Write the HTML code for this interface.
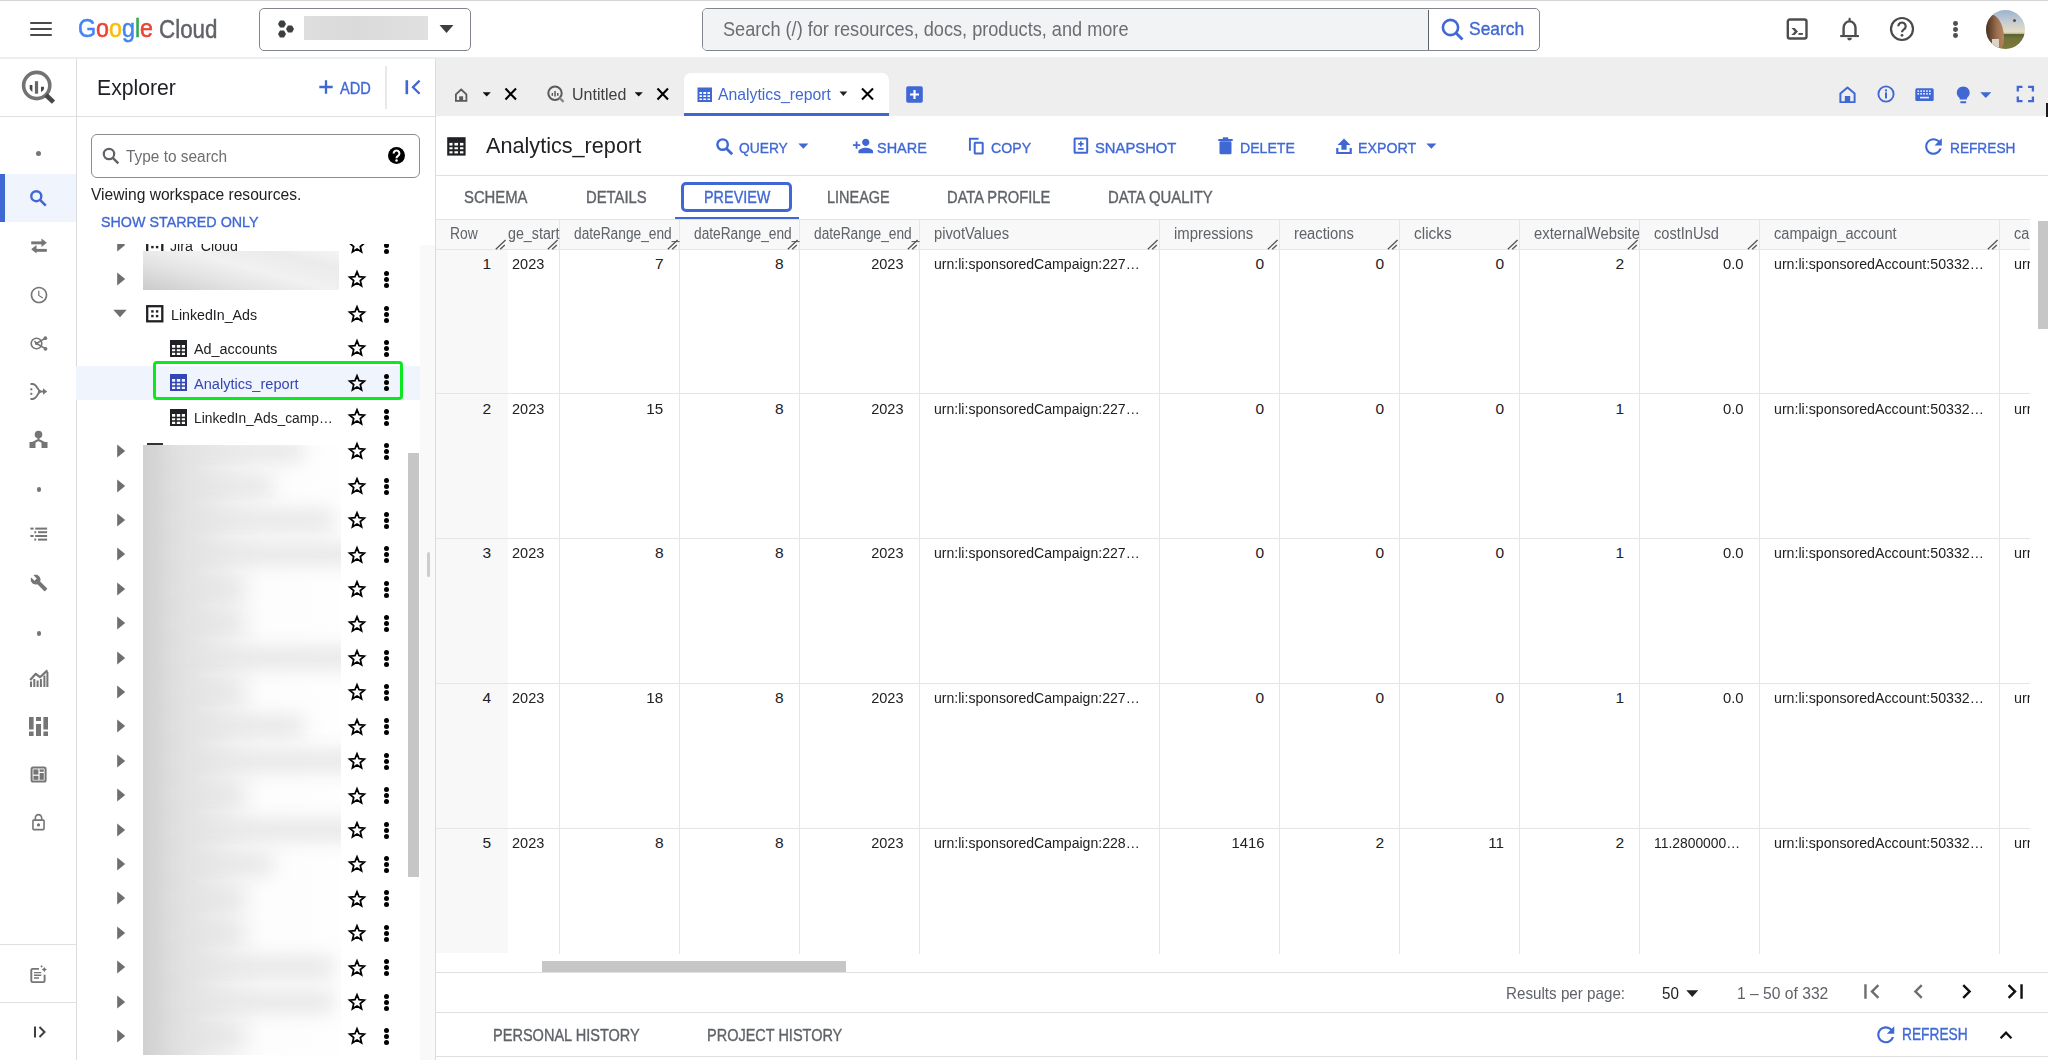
<!DOCTYPE html>
<html><head><meta charset="utf-8"><style>
html,body{margin:0;padding:0;width:2048px;height:1060px;overflow:hidden;background:#fff;}
body{position:relative;font-family:"Liberation Sans",sans-serif;}
.t{position:absolute;white-space:nowrap;line-height:1;font-family:"Liberation Sans",sans-serif;}
.r{position:absolute;display:block;}
</style></head><body>
<div class="r" style="left:0px;top:0px;width:2048px;height:1px;background:#d4d4d4"></div>
<div class="r" style="left:0px;top:57px;width:2048px;height:2px;background:#eceef0"></div>
<div class="r" style="left:30px;top:21.6px;width:21.6px;height:2.2px;background:#4a4a4a;border-radius:1px"></div>
<div class="r" style="left:30px;top:27.7px;width:21.6px;height:2.2px;background:#4a4a4a;border-radius:1px"></div>
<div class="r" style="left:30px;top:33.8px;width:21.6px;height:2.2px;background:#4a4a4a;border-radius:1px"></div>
<div class="t" style="left:78.00px;top:16.41px;font-size:25.5px;-webkit-text-stroke:0.55px currentColor;transform:scaleX(0.9124);transform-origin:0 0"><span style="color:#4285f4">G</span><span style="color:#ea4335">o</span><span style="color:#fbbc05">o</span><span style="color:#4285f4">g</span><span style="color:#34a853">l</span><span style="color:#ea4335">e</span></div>
<div class="t" style="top:16.91px;font-size:25.50px;color:#5f6368;transform:scaleX(0.8784);transform-origin:0 0;left:158.90px;-webkit-text-stroke:0.45px currentColor;">Cloud</div>
<div class="r" style="left:259px;top:8px;width:212px;height:43px;box-sizing:border-box;border:1px solid #80868b;border-radius:5px;background:#fff"></div>
<svg class="r" style="left:275px;top:19px;" width="20" height="20" viewBox="0 0 20 20"><polygon fill="#3c4043" points="5,1.5 9,1.5 11,5 9,8.5 5,8.5 3,5"/><polygon fill="#3c4043" points="13,6.5 17,6.5 19,10 17,13.5 13,13.5 11,10"/><polygon fill="#3c4043" points="5,11.5 9,11.5 11,15 9,18.5 5,18.5 3,15"/></svg>
<div class="r" style="left:304px;top:16px;width:124px;height:24px;background:linear-gradient(90deg,#dedede,#dadada 40%,#e0e0e0);filter:blur(0.6px)"></div>
<svg class="r" style="left:439px;top:24px;" width="16" height="10" viewBox="0 0 16 10"><polygon fill="#3c4043" points="0.5,1 14.5,1 7.5,9"/></svg>
<div class="r" style="left:702px;top:8px;width:838px;height:43px;box-sizing:border-box;border:1px solid #80868b;border-radius:5px;background:#fff;overflow:hidden"></div>
<div class="r" style="left:703px;top:9px;width:725.5px;height:41px;background:#f1f3f4;border-radius:4px 0 0 4px"></div>
<div class="r" style="left:1428px;top:9.5px;width:1px;height:40px;background:#5f6368"></div>
<div class="t" style="top:19.76px;font-size:19.30px;color:#6a6e73;transform:scaleX(0.9413);transform-origin:0 0;left:722.50px;">Search (/) for resources, docs, products, and more</div>
<svg class="r" style="left:1440px;top:17px;" width="26" height="26" viewBox="0 0 26 26"><circle cx="10.5" cy="10.5" r="7.6" fill="none" stroke="#4068d4" stroke-width="2.6"/><line x1="16" y1="16" x2="22.5" y2="22.5" stroke="#4068d4" stroke-width="2.8"/></svg>
<div class="t" style="top:19.62px;font-size:18.40px;color:#4068d4;-webkit-text-stroke:0.35px currentColor;transform:scaleX(0.9485);transform-origin:0 0;left:1469.30px;">Search</div>
<svg class="r" style="left:1785px;top:17px;" width="24" height="24" viewBox="0 0 24 24"><rect x="2.8" y="2.5" width="18.7" height="19" rx="2" fill="none" stroke="#4d4d4d" stroke-width="2.4"/><polygon points="6.4,11 9.6,11 13,14.5 9.6,18 6.4,18 9.8,14.5" fill="#4d4d4d"/><rect x="13.5" y="16" width="4.3" height="1.9" fill="#4d4d4d"/></svg>
<svg class="r" style="left:1838px;top:16px;" width="24" height="26" viewBox="0 0 24 26"><path d="M5.6 19.5 V11.8 A5.95 6.4 0 0 1 17.5 11.8 V19.5" fill="none" stroke="#4d4d4d" stroke-width="2.4"/><rect x="10.5" y="1.7" width="2.2" height="4" rx="1" fill="#4d4d4d"/><rect x="2.2" y="19" width="18.7" height="2.1" fill="#4d4d4d"/><path d="M9.3 21.8 H13.9 A2.3 2.6 0 0 1 9.3 21.8z" fill="#4d4d4d"/></svg>
<svg class="r" style="left:1889px;top:16px;" width="26" height="26" viewBox="0 0 26 26"><circle cx="13" cy="13" r="11" fill="none" stroke="#4a4a4a" stroke-width="2.2"/><path d="M9.3 10.2 a3.7 3.7 0 1 1 5.6 3.2 c-1.3 0.8-1.9 1.4-1.9 2.8" fill="none" stroke="#4a4a4a" stroke-width="2.2"/><circle cx="13" cy="19.3" r="1.4" fill="#4a4a4a"/></svg>
<div class="r" style="left:1953.2px;top:20.9px;width:4.8px;height:4.8px;border-radius:50%;background:#505050"></div>
<div class="r" style="left:1953.2px;top:27.0px;width:4.8px;height:4.8px;border-radius:50%;background:#505050"></div>
<div class="r" style="left:1953.2px;top:33.2px;width:4.8px;height:4.8px;border-radius:50%;background:#505050"></div>
<div class="r" style="left:1986px;top:10px;width:39px;height:39px;border-radius:50%;overflow:hidden;background:linear-gradient(180deg,#9db3cc 0%,#c3ccd3 30%,#e6dcc3 56%,#cfc29a 60%,#55603a 63%,#727238 72%,#7d7a3c 100%)"><div style="position:absolute;left:-6px;top:4px;width:24px;height:40px;border-radius:0 60% 40% 0;background:linear-gradient(90deg,#2a1d16 0%,#5a3c2a 35%,#9a6e4e 70%,#b8875f 100%)"></div><div style="position:absolute;left:6px;top:29px;width:7px;height:12px;background:#dcd4c6"></div><div style="position:absolute;left:27px;top:9px;width:3px;height:3px;border-radius:50%;background:#6b4a2a"></div></div>
<div class="r" style="left:76px;top:59px;width:1px;height:1001px;background:#dadce0"></div>
<div class="r" style="left:0px;top:116px;width:76px;height:1px;background:#e0e0e0"></div>
<svg class="r" style="left:20px;top:69px;" width="38" height="38" viewBox="0 0 38 38"><circle cx="16.7" cy="16.5" r="13.1" fill="none" stroke="#737373" stroke-width="3.6"/><line x1="26" y1="26" x2="33.5" y2="33.2" stroke="#474747" stroke-width="4.6"/><path d="M9.7 16.1 H12.4 V22.9 Q10.6 21.5 9.7 19.8z" fill="#474747"/><rect x="14.9" y="12.2" width="3.2" height="12.5" fill="#666"/><path d="M21 17.7 H24 V20 Q23.2 22 21 22.9z" fill="#474747"/></svg>
<div class="r" style="left:36px;top:150.7px;width:5px;height:5px;border-radius:50%;background:#757575"></div>
<div class="r" style="left:0px;top:174px;width:76px;height:48px;background:#eff4fd"></div>
<div class="r" style="left:0px;top:174px;width:5px;height:48px;background:#4068d4"></div>
<svg class="r" style="left:28px;top:188px;" width="20" height="20" viewBox="0 0 20 20"><circle cx="8.3" cy="8.2" r="5" fill="none" stroke="#4068d4" stroke-width="2.4"/><line x1="11.8" y1="11.7" x2="17.8" y2="17.7" stroke="#4068d4" stroke-width="2.6"/></svg>
<svg class="r" style="left:30px;top:238px;" width="18" height="18" viewBox="0 0 18 18"><rect x="1.2" y="3.4" width="11" height="2.9" fill="#757575"/><polygon points="11.5,0.6 16.8,4.85 11.5,9.1" fill="#757575"/><rect x="5.8" y="10.9" width="11" height="2.9" fill="#757575"/><polygon points="6.5,7.1 1.2,11.35 6.5,15.6" fill="#757575"/></svg>
<svg class="r" style="left:28.5px;top:285px;" width="20" height="20" viewBox="0 0 24 24"><path fill="#757575" d="M11.99 2C6.47 2 2 6.48 2 12s4.47 10 9.99 10C17.52 22 22 17.52 22 12S17.52 2 11.99 2zM12 20c-4.42 0-8-3.58-8-8s3.58-8 8-8 8 3.58 8 8-3.58 8-8 8zm.5-13H11v6l5.25 3.15.75-1.23-4.5-2.67z"/></svg>
<svg class="r" style="left:29px;top:334px;" width="19" height="19" viewBox="0 0 19 19"><circle cx="7.5" cy="9.5" r="5.3" fill="none" stroke="#757575" stroke-width="1.6"/><circle cx="7.5" cy="9.5" r="1.5" fill="#757575"/><path d="M5.5 7 L7.5 9.5 L16.5 4.2 M7.5 9.5 L16.8 14.8" stroke="#757575" stroke-width="1.5" fill="none"/><circle cx="16.3" cy="4.2" r="1.9" fill="#757575"/><circle cx="16.5" cy="14.8" r="1.9" fill="#757575"/></svg>
<svg class="r" style="left:29px;top:382px;" width="19" height="19" viewBox="0 0 19 19"><path d="M1.5 2 H3.5 C8.5 2 8.5 9.5 12 9.5 C8.5 9.5 8.5 17 3.5 17 H1.5" fill="none" stroke="#757575" stroke-width="1.8"/><path d="M9 9.5 H14.5" stroke="#757575" stroke-width="1.9"/><polygon points="14,6.3 18.2,9.5 14,12.7" fill="#757575"/><rect x="1.3" y="6.3" width="2" height="2" fill="#757575"/><rect x="1.3" y="10.8" width="2" height="2" fill="#757575"/></svg>
<svg class="r" style="left:29px;top:430px;" width="19" height="19" viewBox="0 0 19 19"><circle cx="9.5" cy="4.5" r="3.8" fill="#757575"/><rect x="0.5" y="12" width="6" height="6" fill="#757575"/><rect x="12.5" y="12" width="6" height="6" fill="#757575"/><path d="M9.5 7 V10 L3.5 13 M9.5 10 L15.5 13" stroke="#757575" stroke-width="2" fill="none"/></svg>
<div class="r" style="left:36.5px;top:487px;width:4.5px;height:4.5px;border-radius:50%;background:#757575"></div>
<svg class="r" style="left:29px;top:526px;" width="20" height="16" viewBox="0 0 20 16"><rect x="1.4" y="1.6" width="3.2" height="2" fill="#757575"/><rect x="6.2" y="1.6" width="11.9" height="2" fill="#757575"/><rect x="5.3" y="5.2" width="1.9" height="2" fill="#757575"/><rect x="9" y="5.2" width="9.1" height="2" fill="#757575"/><rect x="1.4" y="9" width="3.2" height="2" fill="#757575"/><rect x="6.2" y="9" width="11.9" height="2" fill="#757575"/><rect x="5.3" y="12.6" width="1.9" height="2" fill="#757575"/><rect x="9" y="12.6" width="9.1" height="2" fill="#757575"/></svg>
<svg class="r" style="left:30px;top:574px;" width="18" height="18" viewBox="0 0 24 24"><path fill="#757575" d="M22.7 19l-9.1-9.1c.9-2.3.4-5-1.5-6.9-2-2-5-2.4-7.4-1.3L9 6 6 9 1.6 4.7C.4 7.1.9 10.1 2.9 12.1c1.9 1.9 4.6 2.4 6.9 1.5l9.1 9.1c.4.4 1 .4 1.4 0l2.3-2.3c.5-.4.5-1.1.1-1.4z"/></svg>
<div class="r" style="left:36.5px;top:631px;width:4.5px;height:4.5px;border-radius:50%;background:#757575"></div>
<svg class="r" style="left:29px;top:669px;" width="20" height="20" viewBox="0 0 20 20"><path d="M2 18 V12.5 M5.3 18 V10 M8.6 18 V11.5 M11.9 18 V10 M15.4 18 V6.5 M18.4 18 V3" stroke="#757575" stroke-width="2"/><path d="M1.2 11 L6.8 4.8 L11 8.2 L18.4 1.4" stroke="#757575" stroke-width="2.2" fill="none" stroke-linejoin="round"/></svg>
<svg class="r" style="left:28px;top:716px;" width="21" height="21" viewBox="0 0 21 21"><rect x="1" y="1" width="4.6" height="12.5" fill="#757575"/><rect x="1" y="15.5" width="4.6" height="4.5" fill="#757575"/><rect x="8" y="1" width="5" height="4" fill="#757575"/><rect x="8" y="8" width="5" height="12" fill="#757575"/><rect x="15.4" y="1" width="4.6" height="12.5" fill="#757575"/><rect x="15.4" y="15.5" width="4.6" height="4.5" fill="#757575"/></svg>
<svg class="r" style="left:29px;top:765px;" width="19" height="19" viewBox="0 0 19 19"><rect x="2.6" y="2.6" width="14" height="14" rx="1.6" fill="none" stroke="#757575" stroke-width="2"/><rect x="4.4" y="4.4" width="5" height="5.2" fill="#757575"/><rect x="4.4" y="10.8" width="5" height="4" fill="#757575"/><rect x="10.6" y="4.4" width="4.2" height="2.4" fill="#757575"/><rect x="10.6" y="8" width="4.2" height="6.8" fill="#757575"/></svg>
<svg class="r" style="left:29px;top:813px;" width="19" height="19" viewBox="0 0 24 24"><path fill="#757575" d="M18 8h-1V6c0-2.76-2.24-5-5-5S7 3.24 7 6v2H6c-1.1 0-2 .9-2 2v10c0 1.1.9 2 2 2h12c1.1 0 2-.9 2-2V10c0-1.1-.9-2-2-2zM9 6c0-1.66 1.34-3 3-3s3 1.34 3 3v2H9V6zm9 14H6V10h12v10zm-6-3c1.1 0 2-.9 2-2s-.9-2-2-2-2 .9-2 2 .9 2 2 2z"/></svg>
<div class="r" style="left:0px;top:944px;width:76px;height:1px;background:#e0e0e0"></div>
<svg class="r" style="left:29px;top:965px;" width="19" height="19" viewBox="0 0 19 19"><path d="M10 3.9 H3.6 a1.3 1.3 0 0 0 -1.3 1.3 V15.8 a1.3 1.3 0 0 0 1.3 1.3 H14.3 a1.3 1.3 0 0 0 1.3 -1.3 V9.8" fill="none" stroke="#757575" stroke-width="1.9"/><path d="M5 7.6 H12.3 M5 10.3 H12.3 M5 13 H10" stroke="#757575" stroke-width="1.4"/><path d="M15.3 1.9999999999999996 Q15.950000000000001 3.9499999999999997 17.900000000000002 4.6 Q15.950000000000001 5.25 15.3 7.199999999999999 Q14.65 5.25 12.700000000000001 4.6 Q14.65 3.9499999999999997 15.3 1.9999999999999996z" fill="#757575"/><path d="M12.6 0.09999999999999987 Q12.924999999999999 1.075 13.9 1.4 Q12.924999999999999 1.7249999999999999 12.6 2.7 Q12.275 1.7249999999999999 11.299999999999999 1.4 Q12.275 1.075 12.6 0.09999999999999987z" fill="#757575"/></svg>
<div class="r" style="left:0px;top:1002px;width:76px;height:1px;background:#e0e0e0"></div>
<svg class="r" style="left:32px;top:1024px;" width="16" height="16" viewBox="0 0 16 16"><rect x="2" y="2.5" width="2" height="11" fill="#3c4043"/><path d="M7.5 3 L12.5 8 L7.5 13" fill="none" stroke="#3c4043" stroke-width="2"/></svg>
<div class="r" style="left:76px;top:116px;width:359px;height:1px;background:#e0e0e0"></div>
<div class="t" style="top:76.75px;font-size:22.50px;color:#202124;transform:scaleX(0.9415);transform-origin:0 0;left:96.50px;">Explorer</div>
<svg class="r" style="left:317px;top:78px;" width="18" height="18" viewBox="0 0 18 18"><path d="M9 2.3 V15.7 M2.3 9 H15.7" stroke="#4068d4" stroke-width="2.3"/></svg>
<div class="t" style="top:79.59px;font-size:16.20px;color:#4068d4;-webkit-text-stroke:0.35px currentColor;transform:scaleX(0.9035);transform-origin:0 0;left:340.40px;">ADD</div>
<div class="r" style="left:385px;top:66px;width:1.5px;height:42.5px;background:#e8e8e8"></div>
<svg class="r" style="left:403px;top:78px;" width="20" height="18" viewBox="0 0 20 18"><rect x="2.5" y="2.2" width="2.6" height="14" fill="#4068d4"/><path d="M16.6 2.6 L10 9.2 L16.6 15.8" fill="none" stroke="#4068d4" stroke-width="2.3"/></svg>
<div class="r" style="left:91px;top:134px;width:329px;height:43.5px;box-sizing:border-box;border:1px solid #8a8d91;border-radius:6px;background:#fff"></div>
<svg class="r" style="left:102px;top:147px;" width="18" height="18" viewBox="0 0 18 18"><circle cx="7" cy="7" r="5.2" fill="none" stroke="#5f6368" stroke-width="2.2"/><line x1="10.8" y1="10.8" x2="16.3" y2="16.3" stroke="#5f6368" stroke-width="2.4"/></svg>
<div class="t" style="top:147.86px;font-size:17.30px;color:#6b6e72;transform:scaleX(0.8916);transform-origin:0 0;left:126.30px;">Type to search</div>
<svg class="r" style="left:387px;top:146px;" width="19" height="19" viewBox="0 0 19 19"><circle cx="9.5" cy="9.5" r="8.5" fill="#000"/><path d="M6.6 7.4 a2.9 2.9 0 1 1 4.4 2.5 c-1 0.6-1.5 1.1-1.5 2.3" fill="none" stroke="#fff" stroke-width="2.1"/><circle cx="9.5" cy="14.6" r="1.25" fill="#fff"/></svg>
<div class="t" style="top:186.96px;font-size:16.00px;color:#202124;transform:scaleX(0.9745);transform-origin:0 0;left:91.30px;">Viewing workspace resources.</div>
<div class="t" style="top:213.68px;font-size:15.50px;color:#4068d4;-webkit-text-stroke:0.35px currentColor;transform:scaleX(0.9221);transform-origin:0 0;left:100.90px;">SHOW STARRED ONLY</div>
<div class="r" style="left:76px;top:244px;width:344px;height:816px;overflow:hidden">
<svg class="r" style="left:41px;top:-6.309999999999974px;" width="9" height="14" viewBox="0 0 9 14"><polygon points="0.2,0.5 8.2,7 0.2,13.5" fill="#6e6e6e"/></svg>
<svg class="r" style="left:70px;top:-7.609999999999985px;" width="17.5" height="17.5" viewBox="0 0 17.5 17.5"><rect x="1.2" y="1.2" width="15.1" height="15.1" fill="none" stroke="#202124" stroke-width="2.3"/><rect x="5.2" y="5.2" width="2.4" height="2.4" fill="#202124"/><rect x="9.9" y="5.2" width="2.4" height="2.4" fill="#202124"/><rect x="5.2" y="9.9" width="2.4" height="2.4" fill="#202124"/><rect x="9.9" y="9.9" width="2.4" height="2.4" fill="#202124"/></svg>
<div class="t" style="top:-5.95px;font-size:15.30px;color:#202124;transform:scaleX(0.9289);transform-origin:0 0;left:94.20px;">Jira_Cloud</div>
<svg class="r" style="left:270.75px;top:-9.009999999999962px;" width="20" height="20" viewBox="0 0 20 20"><polygon points="10.00,2.90 12.06,7.77 17.32,8.22 13.33,11.68 14.53,16.83 10.00,14.10 5.47,16.83 6.67,11.68 2.68,8.22 7.94,7.77" fill="none" stroke="#000" stroke-width="1.8" stroke-linejoin="miter" stroke-miterlimit="3"/></svg>
<div class="r" style="left:308.30px;top:-7.50px;width:5px;height:5px;border-radius:50%;background:#000"></div>
<div class="r" style="left:308.30px;top:-1.50px;width:5px;height:5px;border-radius:50%;background:#000"></div>
<div class="r" style="left:308.30px;top:4.50px;width:5px;height:5px;border-radius:50%;background:#000"></div>
<svg class="r" style="left:41px;top:28.100000000000023px;" width="9" height="14" viewBox="0 0 9 14"><polygon points="0.2,0.5 8.2,7 0.2,13.5" fill="#6e6e6e"/></svg>
<div class="r" style="left:67px;top:6.599999999999994px;width:196px;height:39px;background:linear-gradient(15deg,#cbcbcb 0%,#e2e2e2 30%,#f1f1f1 55%,#ebebeb 80%,#f4f4f4 100%)"></div>
<svg class="r" style="left:270.75px;top:25.400000000000034px;" width="20" height="20" viewBox="0 0 20 20"><polygon points="10.00,2.90 12.06,7.77 17.32,8.22 13.33,11.68 14.53,16.83 10.00,14.10 5.47,16.83 6.67,11.68 2.68,8.22 7.94,7.77" fill="none" stroke="#000" stroke-width="1.8" stroke-linejoin="miter" stroke-miterlimit="3"/></svg>
<div class="r" style="left:308.30px;top:26.50px;width:5px;height:5px;border-radius:50%;background:#000"></div>
<div class="r" style="left:308.30px;top:32.50px;width:5px;height:5px;border-radius:50%;background:#000"></div>
<div class="r" style="left:308.30px;top:38.50px;width:5px;height:5px;border-radius:50%;background:#000"></div>
<svg class="r" style="left:37px;top:65.00999999999999px;" width="14" height="9" viewBox="0 0 14 9"><polygon points="0.3,0.8 13.7,0.8 7,8.3" fill="#6e6e6e"/></svg>
<svg class="r" style="left:70px;top:61.20999999999998px;" width="17.5" height="17.5" viewBox="0 0 17.5 17.5"><rect x="1.2" y="1.2" width="15.1" height="15.1" fill="none" stroke="#202124" stroke-width="2.3"/><rect x="5.2" y="5.2" width="2.4" height="2.4" fill="#202124"/><rect x="9.9" y="5.2" width="2.4" height="2.4" fill="#202124"/><rect x="5.2" y="9.9" width="2.4" height="2.4" fill="#202124"/><rect x="9.9" y="9.9" width="2.4" height="2.4" fill="#202124"/></svg>
<div class="t" style="top:62.95px;font-size:15.30px;color:#202124;transform:scaleX(0.9288);transform-origin:0 0;left:94.50px;">LinkedIn_Ads</div>
<svg class="r" style="left:270.75px;top:59.81px;" width="20" height="20" viewBox="0 0 20 20"><polygon points="10.00,2.90 12.06,7.77 17.32,8.22 13.33,11.68 14.53,16.83 10.00,14.10 5.47,16.83 6.67,11.68 2.68,8.22 7.94,7.77" fill="none" stroke="#000" stroke-width="1.8" stroke-linejoin="miter" stroke-miterlimit="3"/></svg>
<div class="r" style="left:308.30px;top:61.50px;width:5px;height:5px;border-radius:50%;background:#000"></div>
<div class="r" style="left:308.30px;top:67.50px;width:5px;height:5px;border-radius:50%;background:#000"></div>
<div class="r" style="left:308.30px;top:73.50px;width:5px;height:5px;border-radius:50%;background:#000"></div>
<svg class="r" style="left:94px;top:95.72000000000003px;" width="17" height="17" viewBox="0 0 17 17"><rect x="1" y="1" width="15" height="15" fill="none" stroke="#202124" stroke-width="2"/><rect x="1" y="1" width="15" height="4" fill="#202124"/><path d="M1 8.5 H16 M1 12 H16 M6 5 V16 M11 5 V16" stroke="#202124" stroke-width="1.6"/></svg>
<div class="t" style="top:97.15px;font-size:15.30px;color:#202124;transform:scaleX(0.9401);transform-origin:0 0;left:118.40px;">Ad_accounts</div>
<svg class="r" style="left:270.75px;top:94.22000000000003px;" width="20" height="20" viewBox="0 0 20 20"><polygon points="10.00,2.90 12.06,7.77 17.32,8.22 13.33,11.68 14.53,16.83 10.00,14.10 5.47,16.83 6.67,11.68 2.68,8.22 7.94,7.77" fill="none" stroke="#000" stroke-width="1.8" stroke-linejoin="miter" stroke-miterlimit="3"/></svg>
<div class="r" style="left:308.30px;top:95.50px;width:5px;height:5px;border-radius:50%;background:#000"></div>
<div class="r" style="left:308.30px;top:101.50px;width:5px;height:5px;border-radius:50%;background:#000"></div>
<div class="r" style="left:308.30px;top:107.50px;width:5px;height:5px;border-radius:50%;background:#000"></div>
<div class="r" style="left:0px;top:121.60000000000002px;width:344px;height:34.1px;background:#eff4fd"></div>
<div class="r" style="left:77.30000000000001px;top:117px;width:249.5px;height:39.3px;box-sizing:border-box;border:3px solid #0ae81e;border-radius:4px"></div>
<svg class="r" style="left:94px;top:130.13000000000005px;" width="17" height="17" viewBox="0 0 17 17"><rect x="1" y="1" width="15" height="15" fill="none" stroke="#3446b4" stroke-width="2"/><rect x="1" y="1" width="15" height="4" fill="#3446b4"/><path d="M1 8.5 H16 M1 12 H16 M6 5 V16 M11 5 V16" stroke="#3446b4" stroke-width="1.6"/></svg>
<div class="t" style="top:131.55px;font-size:15.30px;color:#3446b4;transform:scaleX(0.9535);transform-origin:0 0;left:118.40px;">Analytics_report</div>
<svg class="r" style="left:270.75px;top:128.63000000000005px;" width="20" height="20" viewBox="0 0 20 20"><polygon points="10.00,2.90 12.06,7.77 17.32,8.22 13.33,11.68 14.53,16.83 10.00,14.10 5.47,16.83 6.67,11.68 2.68,8.22 7.94,7.77" fill="none" stroke="#000" stroke-width="1.8" stroke-linejoin="miter" stroke-miterlimit="3"/></svg>
<div class="r" style="left:308.30px;top:129.50px;width:5px;height:5px;border-radius:50%;background:#000"></div>
<div class="r" style="left:308.30px;top:135.50px;width:5px;height:5px;border-radius:50%;background:#000"></div>
<div class="r" style="left:308.30px;top:141.50px;width:5px;height:5px;border-radius:50%;background:#000"></div>
<svg class="r" style="left:94px;top:164.54000000000002px;" width="17" height="17" viewBox="0 0 17 17"><rect x="1" y="1" width="15" height="15" fill="none" stroke="#202124" stroke-width="2"/><rect x="1" y="1" width="15" height="4" fill="#202124"/><path d="M1 8.5 H16 M1 12 H16 M6 5 V16 M11 5 V16" stroke="#202124" stroke-width="1.6"/></svg>
<div class="t" style="top:165.95px;font-size:15.30px;color:#202124;transform:scaleX(0.9012);transform-origin:0 0;left:118.40px;">LinkedIn_Ads_camp…</div>
<svg class="r" style="left:270.75px;top:163.04000000000002px;" width="20" height="20" viewBox="0 0 20 20"><polygon points="10.00,2.90 12.06,7.77 17.32,8.22 13.33,11.68 14.53,16.83 10.00,14.10 5.47,16.83 6.67,11.68 2.68,8.22 7.94,7.77" fill="none" stroke="#000" stroke-width="1.8" stroke-linejoin="miter" stroke-miterlimit="3"/></svg>
<div class="r" style="left:308.30px;top:164.50px;width:5px;height:5px;border-radius:50%;background:#000"></div>
<div class="r" style="left:308.30px;top:170.50px;width:5px;height:5px;border-radius:50%;background:#000"></div>
<div class="r" style="left:308.30px;top:176.50px;width:5px;height:5px;border-radius:50%;background:#000"></div>
<svg class="r" style="left:41px;top:200.14999999999998px;" width="9" height="14" viewBox="0 0 9 14"><polygon points="0.2,0.5 8.2,7 0.2,13.5" fill="#6e6e6e"/></svg>
<svg class="r" style="left:270.75px;top:197.45px;" width="20" height="20" viewBox="0 0 20 20"><polygon points="10.00,2.90 12.06,7.77 17.32,8.22 13.33,11.68 14.53,16.83 10.00,14.10 5.47,16.83 6.67,11.68 2.68,8.22 7.94,7.77" fill="none" stroke="#000" stroke-width="1.8" stroke-linejoin="miter" stroke-miterlimit="3"/></svg>
<div class="r" style="left:308.30px;top:198.50px;width:5px;height:5px;border-radius:50%;background:#000"></div>
<div class="r" style="left:308.30px;top:204.50px;width:5px;height:5px;border-radius:50%;background:#000"></div>
<div class="r" style="left:308.30px;top:210.50px;width:5px;height:5px;border-radius:50%;background:#000"></div>
<svg class="r" style="left:41px;top:234.56px;" width="9" height="14" viewBox="0 0 9 14"><polygon points="0.2,0.5 8.2,7 0.2,13.5" fill="#6e6e6e"/></svg>
<svg class="r" style="left:270.75px;top:231.86px;" width="20" height="20" viewBox="0 0 20 20"><polygon points="10.00,2.90 12.06,7.77 17.32,8.22 13.33,11.68 14.53,16.83 10.00,14.10 5.47,16.83 6.67,11.68 2.68,8.22 7.94,7.77" fill="none" stroke="#000" stroke-width="1.8" stroke-linejoin="miter" stroke-miterlimit="3"/></svg>
<div class="r" style="left:308.30px;top:233.50px;width:5px;height:5px;border-radius:50%;background:#000"></div>
<div class="r" style="left:308.30px;top:239.50px;width:5px;height:5px;border-radius:50%;background:#000"></div>
<div class="r" style="left:308.30px;top:245.50px;width:5px;height:5px;border-radius:50%;background:#000"></div>
<svg class="r" style="left:41px;top:268.97px;" width="9" height="14" viewBox="0 0 9 14"><polygon points="0.2,0.5 8.2,7 0.2,13.5" fill="#6e6e6e"/></svg>
<svg class="r" style="left:270.75px;top:266.27000000000004px;" width="20" height="20" viewBox="0 0 20 20"><polygon points="10.00,2.90 12.06,7.77 17.32,8.22 13.33,11.68 14.53,16.83 10.00,14.10 5.47,16.83 6.67,11.68 2.68,8.22 7.94,7.77" fill="none" stroke="#000" stroke-width="1.8" stroke-linejoin="miter" stroke-miterlimit="3"/></svg>
<div class="r" style="left:308.30px;top:267.50px;width:5px;height:5px;border-radius:50%;background:#000"></div>
<div class="r" style="left:308.30px;top:273.50px;width:5px;height:5px;border-radius:50%;background:#000"></div>
<div class="r" style="left:308.30px;top:279.50px;width:5px;height:5px;border-radius:50%;background:#000"></div>
<svg class="r" style="left:41px;top:303.38px;" width="9" height="14" viewBox="0 0 9 14"><polygon points="0.2,0.5 8.2,7 0.2,13.5" fill="#6e6e6e"/></svg>
<svg class="r" style="left:270.75px;top:300.67999999999995px;" width="20" height="20" viewBox="0 0 20 20"><polygon points="10.00,2.90 12.06,7.77 17.32,8.22 13.33,11.68 14.53,16.83 10.00,14.10 5.47,16.83 6.67,11.68 2.68,8.22 7.94,7.77" fill="none" stroke="#000" stroke-width="1.8" stroke-linejoin="miter" stroke-miterlimit="3"/></svg>
<div class="r" style="left:308.30px;top:301.50px;width:5px;height:5px;border-radius:50%;background:#000"></div>
<div class="r" style="left:308.30px;top:307.50px;width:5px;height:5px;border-radius:50%;background:#000"></div>
<div class="r" style="left:308.30px;top:313.50px;width:5px;height:5px;border-radius:50%;background:#000"></div>
<svg class="r" style="left:41px;top:337.78999999999996px;" width="9" height="14" viewBox="0 0 9 14"><polygon points="0.2,0.5 8.2,7 0.2,13.5" fill="#6e6e6e"/></svg>
<svg class="r" style="left:270.75px;top:335.0899999999999px;" width="20" height="20" viewBox="0 0 20 20"><polygon points="10.00,2.90 12.06,7.77 17.32,8.22 13.33,11.68 14.53,16.83 10.00,14.10 5.47,16.83 6.67,11.68 2.68,8.22 7.94,7.77" fill="none" stroke="#000" stroke-width="1.8" stroke-linejoin="miter" stroke-miterlimit="3"/></svg>
<div class="r" style="left:308.30px;top:336.50px;width:5px;height:5px;border-radius:50%;background:#000"></div>
<div class="r" style="left:308.30px;top:342.50px;width:5px;height:5px;border-radius:50%;background:#000"></div>
<div class="r" style="left:308.30px;top:348.50px;width:5px;height:5px;border-radius:50%;background:#000"></div>
<svg class="r" style="left:41px;top:372.20000000000005px;" width="9" height="14" viewBox="0 0 9 14"><polygon points="0.2,0.5 8.2,7 0.2,13.5" fill="#6e6e6e"/></svg>
<svg class="r" style="left:270.75px;top:369.5px;" width="20" height="20" viewBox="0 0 20 20"><polygon points="10.00,2.90 12.06,7.77 17.32,8.22 13.33,11.68 14.53,16.83 10.00,14.10 5.47,16.83 6.67,11.68 2.68,8.22 7.94,7.77" fill="none" stroke="#000" stroke-width="1.8" stroke-linejoin="miter" stroke-miterlimit="3"/></svg>
<div class="r" style="left:308.30px;top:370.50px;width:5px;height:5px;border-radius:50%;background:#000"></div>
<div class="r" style="left:308.30px;top:376.50px;width:5px;height:5px;border-radius:50%;background:#000"></div>
<div class="r" style="left:308.30px;top:382.50px;width:5px;height:5px;border-radius:50%;background:#000"></div>
<svg class="r" style="left:41px;top:406.61px;" width="9" height="14" viewBox="0 0 9 14"><polygon points="0.2,0.5 8.2,7 0.2,13.5" fill="#6e6e6e"/></svg>
<svg class="r" style="left:270.75px;top:403.90999999999997px;" width="20" height="20" viewBox="0 0 20 20"><polygon points="10.00,2.90 12.06,7.77 17.32,8.22 13.33,11.68 14.53,16.83 10.00,14.10 5.47,16.83 6.67,11.68 2.68,8.22 7.94,7.77" fill="none" stroke="#000" stroke-width="1.8" stroke-linejoin="miter" stroke-miterlimit="3"/></svg>
<div class="r" style="left:308.30px;top:405.50px;width:5px;height:5px;border-radius:50%;background:#000"></div>
<div class="r" style="left:308.30px;top:411.50px;width:5px;height:5px;border-radius:50%;background:#000"></div>
<div class="r" style="left:308.30px;top:417.50px;width:5px;height:5px;border-radius:50%;background:#000"></div>
<svg class="r" style="left:41px;top:441.02px;" width="9" height="14" viewBox="0 0 9 14"><polygon points="0.2,0.5 8.2,7 0.2,13.5" fill="#6e6e6e"/></svg>
<svg class="r" style="left:270.75px;top:438.31999999999994px;" width="20" height="20" viewBox="0 0 20 20"><polygon points="10.00,2.90 12.06,7.77 17.32,8.22 13.33,11.68 14.53,16.83 10.00,14.10 5.47,16.83 6.67,11.68 2.68,8.22 7.94,7.77" fill="none" stroke="#000" stroke-width="1.8" stroke-linejoin="miter" stroke-miterlimit="3"/></svg>
<div class="r" style="left:308.30px;top:439.50px;width:5px;height:5px;border-radius:50%;background:#000"></div>
<div class="r" style="left:308.30px;top:445.50px;width:5px;height:5px;border-radius:50%;background:#000"></div>
<div class="r" style="left:308.30px;top:451.50px;width:5px;height:5px;border-radius:50%;background:#000"></div>
<svg class="r" style="left:41px;top:475.42999999999995px;" width="9" height="14" viewBox="0 0 9 14"><polygon points="0.2,0.5 8.2,7 0.2,13.5" fill="#6e6e6e"/></svg>
<svg class="r" style="left:270.75px;top:472.7299999999999px;" width="20" height="20" viewBox="0 0 20 20"><polygon points="10.00,2.90 12.06,7.77 17.32,8.22 13.33,11.68 14.53,16.83 10.00,14.10 5.47,16.83 6.67,11.68 2.68,8.22 7.94,7.77" fill="none" stroke="#000" stroke-width="1.8" stroke-linejoin="miter" stroke-miterlimit="3"/></svg>
<div class="r" style="left:308.30px;top:473.50px;width:5px;height:5px;border-radius:50%;background:#000"></div>
<div class="r" style="left:308.30px;top:479.50px;width:5px;height:5px;border-radius:50%;background:#000"></div>
<div class="r" style="left:308.30px;top:485.50px;width:5px;height:5px;border-radius:50%;background:#000"></div>
<svg class="r" style="left:41px;top:509.8399999999999px;" width="9" height="14" viewBox="0 0 9 14"><polygon points="0.2,0.5 8.2,7 0.2,13.5" fill="#6e6e6e"/></svg>
<svg class="r" style="left:270.75px;top:507.1399999999999px;" width="20" height="20" viewBox="0 0 20 20"><polygon points="10.00,2.90 12.06,7.77 17.32,8.22 13.33,11.68 14.53,16.83 10.00,14.10 5.47,16.83 6.67,11.68 2.68,8.22 7.94,7.77" fill="none" stroke="#000" stroke-width="1.8" stroke-linejoin="miter" stroke-miterlimit="3"/></svg>
<div class="r" style="left:308.30px;top:508.50px;width:5px;height:5px;border-radius:50%;background:#000"></div>
<div class="r" style="left:308.30px;top:514.50px;width:5px;height:5px;border-radius:50%;background:#000"></div>
<div class="r" style="left:308.30px;top:520.50px;width:5px;height:5px;border-radius:50%;background:#000"></div>
<svg class="r" style="left:41px;top:544.25px;" width="9" height="14" viewBox="0 0 9 14"><polygon points="0.2,0.5 8.2,7 0.2,13.5" fill="#6e6e6e"/></svg>
<svg class="r" style="left:270.75px;top:541.55px;" width="20" height="20" viewBox="0 0 20 20"><polygon points="10.00,2.90 12.06,7.77 17.32,8.22 13.33,11.68 14.53,16.83 10.00,14.10 5.47,16.83 6.67,11.68 2.68,8.22 7.94,7.77" fill="none" stroke="#000" stroke-width="1.8" stroke-linejoin="miter" stroke-miterlimit="3"/></svg>
<div class="r" style="left:308.30px;top:542.50px;width:5px;height:5px;border-radius:50%;background:#000"></div>
<div class="r" style="left:308.30px;top:548.50px;width:5px;height:5px;border-radius:50%;background:#000"></div>
<div class="r" style="left:308.30px;top:554.50px;width:5px;height:5px;border-radius:50%;background:#000"></div>
<svg class="r" style="left:41px;top:578.66px;" width="9" height="14" viewBox="0 0 9 14"><polygon points="0.2,0.5 8.2,7 0.2,13.5" fill="#6e6e6e"/></svg>
<svg class="r" style="left:270.75px;top:575.9599999999999px;" width="20" height="20" viewBox="0 0 20 20"><polygon points="10.00,2.90 12.06,7.77 17.32,8.22 13.33,11.68 14.53,16.83 10.00,14.10 5.47,16.83 6.67,11.68 2.68,8.22 7.94,7.77" fill="none" stroke="#000" stroke-width="1.8" stroke-linejoin="miter" stroke-miterlimit="3"/></svg>
<div class="r" style="left:308.30px;top:577.50px;width:5px;height:5px;border-radius:50%;background:#000"></div>
<div class="r" style="left:308.30px;top:583.50px;width:5px;height:5px;border-radius:50%;background:#000"></div>
<div class="r" style="left:308.30px;top:589.50px;width:5px;height:5px;border-radius:50%;background:#000"></div>
<svg class="r" style="left:41px;top:613.0699999999999px;" width="9" height="14" viewBox="0 0 9 14"><polygon points="0.2,0.5 8.2,7 0.2,13.5" fill="#6e6e6e"/></svg>
<svg class="r" style="left:270.75px;top:610.3699999999999px;" width="20" height="20" viewBox="0 0 20 20"><polygon points="10.00,2.90 12.06,7.77 17.32,8.22 13.33,11.68 14.53,16.83 10.00,14.10 5.47,16.83 6.67,11.68 2.68,8.22 7.94,7.77" fill="none" stroke="#000" stroke-width="1.8" stroke-linejoin="miter" stroke-miterlimit="3"/></svg>
<div class="r" style="left:308.30px;top:611.50px;width:5px;height:5px;border-radius:50%;background:#000"></div>
<div class="r" style="left:308.30px;top:617.50px;width:5px;height:5px;border-radius:50%;background:#000"></div>
<div class="r" style="left:308.30px;top:623.50px;width:5px;height:5px;border-radius:50%;background:#000"></div>
<svg class="r" style="left:41px;top:647.4799999999999px;" width="9" height="14" viewBox="0 0 9 14"><polygon points="0.2,0.5 8.2,7 0.2,13.5" fill="#6e6e6e"/></svg>
<svg class="r" style="left:270.75px;top:644.7799999999999px;" width="20" height="20" viewBox="0 0 20 20"><polygon points="10.00,2.90 12.06,7.77 17.32,8.22 13.33,11.68 14.53,16.83 10.00,14.10 5.47,16.83 6.67,11.68 2.68,8.22 7.94,7.77" fill="none" stroke="#000" stroke-width="1.8" stroke-linejoin="miter" stroke-miterlimit="3"/></svg>
<div class="r" style="left:308.30px;top:645.50px;width:5px;height:5px;border-radius:50%;background:#000"></div>
<div class="r" style="left:308.30px;top:651.50px;width:5px;height:5px;border-radius:50%;background:#000"></div>
<div class="r" style="left:308.30px;top:657.50px;width:5px;height:5px;border-radius:50%;background:#000"></div>
<svg class="r" style="left:41px;top:681.89px;" width="9" height="14" viewBox="0 0 9 14"><polygon points="0.2,0.5 8.2,7 0.2,13.5" fill="#6e6e6e"/></svg>
<svg class="r" style="left:270.75px;top:679.1899999999999px;" width="20" height="20" viewBox="0 0 20 20"><polygon points="10.00,2.90 12.06,7.77 17.32,8.22 13.33,11.68 14.53,16.83 10.00,14.10 5.47,16.83 6.67,11.68 2.68,8.22 7.94,7.77" fill="none" stroke="#000" stroke-width="1.8" stroke-linejoin="miter" stroke-miterlimit="3"/></svg>
<div class="r" style="left:308.30px;top:680.50px;width:5px;height:5px;border-radius:50%;background:#000"></div>
<div class="r" style="left:308.30px;top:686.50px;width:5px;height:5px;border-radius:50%;background:#000"></div>
<div class="r" style="left:308.30px;top:692.50px;width:5px;height:5px;border-radius:50%;background:#000"></div>
<svg class="r" style="left:41px;top:716.3px;" width="9" height="14" viewBox="0 0 9 14"><polygon points="0.2,0.5 8.2,7 0.2,13.5" fill="#6e6e6e"/></svg>
<svg class="r" style="left:270.75px;top:713.5999999999999px;" width="20" height="20" viewBox="0 0 20 20"><polygon points="10.00,2.90 12.06,7.77 17.32,8.22 13.33,11.68 14.53,16.83 10.00,14.10 5.47,16.83 6.67,11.68 2.68,8.22 7.94,7.77" fill="none" stroke="#000" stroke-width="1.8" stroke-linejoin="miter" stroke-miterlimit="3"/></svg>
<div class="r" style="left:308.30px;top:714.50px;width:5px;height:5px;border-radius:50%;background:#000"></div>
<div class="r" style="left:308.30px;top:720.50px;width:5px;height:5px;border-radius:50%;background:#000"></div>
<div class="r" style="left:308.30px;top:726.50px;width:5px;height:5px;border-radius:50%;background:#000"></div>
<svg class="r" style="left:41px;top:750.7099999999999px;" width="9" height="14" viewBox="0 0 9 14"><polygon points="0.2,0.5 8.2,7 0.2,13.5" fill="#6e6e6e"/></svg>
<svg class="r" style="left:270.75px;top:748.0099999999999px;" width="20" height="20" viewBox="0 0 20 20"><polygon points="10.00,2.90 12.06,7.77 17.32,8.22 13.33,11.68 14.53,16.83 10.00,14.10 5.47,16.83 6.67,11.68 2.68,8.22 7.94,7.77" fill="none" stroke="#000" stroke-width="1.8" stroke-linejoin="miter" stroke-miterlimit="3"/></svg>
<div class="r" style="left:308.30px;top:749.50px;width:5px;height:5px;border-radius:50%;background:#000"></div>
<div class="r" style="left:308.30px;top:755.50px;width:5px;height:5px;border-radius:50%;background:#000"></div>
<div class="r" style="left:308.30px;top:761.50px;width:5px;height:5px;border-radius:50%;background:#000"></div>
<svg class="r" style="left:41px;top:785.1199999999999px;" width="9" height="14" viewBox="0 0 9 14"><polygon points="0.2,0.5 8.2,7 0.2,13.5" fill="#6e6e6e"/></svg>
<svg class="r" style="left:270.75px;top:782.4199999999998px;" width="20" height="20" viewBox="0 0 20 20"><polygon points="10.00,2.90 12.06,7.77 17.32,8.22 13.33,11.68 14.53,16.83 10.00,14.10 5.47,16.83 6.67,11.68 2.68,8.22 7.94,7.77" fill="none" stroke="#000" stroke-width="1.8" stroke-linejoin="miter" stroke-miterlimit="3"/></svg>
<div class="r" style="left:308.30px;top:783.50px;width:5px;height:5px;border-radius:50%;background:#000"></div>
<div class="r" style="left:308.30px;top:789.50px;width:5px;height:5px;border-radius:50%;background:#000"></div>
<div class="r" style="left:308.30px;top:795.50px;width:5px;height:5px;border-radius:50%;background:#000"></div>
<div class="r" style="left:71px;top:198.5px;width:16px;height:2.2px;background:#333"></div>
<div class="r" style="left:67px;top:200.5px;width:198px;height:610px;overflow:hidden;background:linear-gradient(90deg,#d0d0d0 0%,#d8d8d8 9%,#e3e3e3 22%,#eeeeee 35%,#f8f8f8 48%,#fdfdfd 62%,#fefefe 100%)">
<div class="r" style="left:30px;top:-2.4px;width:130px;height:18px;background:#e2e2e2;filter:blur(10px)"></div>
<div class="r" style="left:30px;top:32.1px;width:100px;height:18px;background:#e2e2e2;filter:blur(10px)"></div>
<div class="r" style="left:30px;top:66.5px;width:160px;height:18px;background:#e2e2e2;filter:blur(10px)"></div>
<div class="r" style="left:30px;top:100.9px;width:210px;height:18px;background:#e2e2e2;filter:blur(10px)"></div>
<div class="r" style="left:30px;top:135.3px;width:70px;height:18px;background:#e2e2e2;filter:blur(10px)"></div>
<div class="r" style="left:30px;top:169.7px;width:70px;height:18px;background:#e2e2e2;filter:blur(10px)"></div>
<div class="r" style="left:30px;top:204.1px;width:190px;height:18px;background:#e2e2e2;filter:blur(10px)"></div>
<div class="r" style="left:30px;top:238.5px;width:70px;height:18px;background:#e2e2e2;filter:blur(10px)"></div>
<div class="r" style="left:30px;top:272.9px;width:130px;height:18px;background:#e2e2e2;filter:blur(10px)"></div>
<div class="r" style="left:30px;top:307.3px;width:190px;height:18px;background:#e2e2e2;filter:blur(10px)"></div>
<div class="r" style="left:30px;top:341.8px;width:70px;height:18px;background:#e2e2e2;filter:blur(10px)"></div>
<div class="r" style="left:30px;top:376.2px;width:190px;height:18px;background:#e2e2e2;filter:blur(10px)"></div>
<div class="r" style="left:30px;top:410.6px;width:100px;height:18px;background:#e2e2e2;filter:blur(10px)"></div>
<div class="r" style="left:30px;top:445.0px;width:70px;height:18px;background:#e2e2e2;filter:blur(10px)"></div>
<div class="r" style="left:30px;top:479.4px;width:70px;height:18px;background:#e2e2e2;filter:blur(10px)"></div>
<div class="r" style="left:30px;top:513.8px;width:160px;height:18px;background:#e2e2e2;filter:blur(10px)"></div>
<div class="r" style="left:30px;top:548.2px;width:160px;height:18px;background:#e2e2e2;filter:blur(10px)"></div>
<div class="r" style="left:30px;top:582.6px;width:70px;height:18px;background:#e2e2e2;filter:blur(10px)"></div>
</div>
</div>
<div class="r" style="left:420px;top:245px;width:14.5px;height:815px;background:#f9f9f9"></div>
<div class="r" style="left:408px;top:453px;width:11px;height:423.6px;background:#c6c6c6"></div>
<div class="r" style="left:426.5px;top:551.6px;width:3.5px;height:25.2px;background:#cdcdcd;border-radius:2px"></div>
<div class="r" style="left:434.5px;top:59px;width:1.5px;height:1001px;background:#dcdcdc"></div>
<div class="r" style="left:436px;top:59px;width:1612px;height:57.3px;background:#eeeeee"></div>
<svg class="r" style="left:454px;top:87.5px;" width="14" height="14.5" viewBox="0 0 14 14.5"><path d="M7.15 1.5 L12.4 6.3 V12.9 H1.9 V6.3 Z" fill="none" stroke="#5a5a5a" stroke-width="1.8" stroke-linejoin="miter"/><rect x="5.2" y="8.3" width="3.9" height="4.6" fill="#5a5a5a"/></svg>
<svg class="r" style="left:482px;top:91.5px;" width="9" height="5" viewBox="0 0 9 5"><polygon points="0.6,0.3 8.8,0.3 4.7,4.6" fill="#111"/></svg>
<svg class="r" style="left:503px;top:87px;" width="15" height="14" viewBox="0 0 15 14"><path d="M2.5 1.6 L13 12.4 M13 1.6 L2.5 12.4" stroke="#000" stroke-width="2.1"/></svg>
<svg class="r" style="left:546px;top:85px;" width="19" height="19" viewBox="0 0 19 19"><circle cx="9" cy="8.3" r="6.7" fill="none" stroke="#5a5a5a" stroke-width="2"/><line x1="13.6" y1="12.9" x2="17.6" y2="16.9" stroke="#888" stroke-width="2.2"/><rect x="5.6" y="8" width="1.5" height="2.8" fill="#5a5a5a"/><rect x="8.3" y="6" width="1.5" height="5.5" fill="#5a5a5a"/><rect x="11" y="8" width="1.5" height="2.8" fill="#5a5a5a"/></svg>
<div class="t" style="top:86.39px;font-size:16.20px;color:#3c4043;transform:scaleX(0.9891);transform-origin:0 0;left:572.30px;">Untitled</div>
<svg class="r" style="left:634px;top:91.5px;" width="9" height="5" viewBox="0 0 9 5"><polygon points="0.6,0.3 8.8,0.3 4.7,4.6" fill="#111"/></svg>
<svg class="r" style="left:654.5px;top:87px;" width="15" height="14" viewBox="0 0 15 14"><path d="M2.5 1.6 L13 12.4 M13 1.6 L2.5 12.4" stroke="#000" stroke-width="2.1"/></svg>
<div class="r" style="left:684px;top:73px;width:205px;height:43.3px;background:#fff;border-radius:7px 7px 0 0"></div>
<div class="r" style="left:684px;top:113px;width:205px;height:3.3px;background:#4068d4"></div>
<svg class="r" style="left:696.5px;top:87px;" width="15" height="15" viewBox="0 0 15 15"><rect x="1.5" y="1.5" width="12.5" height="12.5" fill="none" stroke="#4068d4" stroke-width="2"/><rect x="1.5" y="1.5" width="12.5" height="3.5" fill="#4068d4"/><path d="M1.5 7.6 H14 M1.5 10.8 H14 M5.6 5 V14 M9.8 5 V14" stroke="#4068d4" stroke-width="1.4"/></svg>
<div class="t" style="top:86.39px;font-size:16.20px;color:#4068d4;transform:scaleX(0.9733);transform-origin:0 0;left:718.30px;">Analytics_report</div>
<svg class="r" style="left:839.3px;top:91.2px;" width="9" height="6" viewBox="0 0 9 6"><polygon points="0.5,0.5 8.3,0.5 4.4,5" fill="#202124"/></svg>
<svg class="r" style="left:860px;top:87px;" width="15" height="14" viewBox="0 0 15 14"><path d="M2 1.5 L13 12.5 M13 1.5 L2 12.5" stroke="#000" stroke-width="2.1"/></svg>
<svg class="r" style="left:905.5px;top:86px;" width="17" height="17" viewBox="0 0 17 17"><rect x="0.2" y="0.3" width="16.6" height="16.4" rx="1.8" fill="#4068d4"/><path d="M8.5 4 V13 M4 8.5 H13" stroke="#fff" stroke-width="2.2"/></svg>
<svg class="r" style="left:1839px;top:85.5px;" width="17" height="17.5" viewBox="0 0 17 17.5"><path d="M8.5 1.5 L15.6 7.6 V16.2 H1.4 V7.6 Z" fill="none" stroke="#4068d4" stroke-width="2" stroke-linejoin="round"/><rect x="5.8" y="10" width="5.4" height="6.2" fill="#4068d4"/></svg>
<svg class="r" style="left:1877px;top:85px;" width="18" height="18" viewBox="0 0 18 18"><circle cx="9" cy="9" r="7.6" fill="none" stroke="#4068d4" stroke-width="1.9"/><rect x="8" y="7.4" width="2" height="6" fill="#4068d4"/><rect x="8" y="4.4" width="2" height="2" fill="#4068d4"/></svg>
<svg class="r" style="left:1915px;top:87.5px;" width="19" height="13.5" viewBox="0 0 19 13.5"><rect x="0.3" y="0.3" width="18.4" height="12.8" rx="1.6" fill="#4068d4"/><rect x="2.4" y="2.3" width="1.7" height="1.6" fill="#eef"/><rect x="2.4" y="5.0" width="1.7" height="1.6" fill="#eef"/><rect x="5.3" y="2.3" width="1.7" height="1.6" fill="#eef"/><rect x="5.3" y="5.0" width="1.7" height="1.6" fill="#eef"/><rect x="8.2" y="2.3" width="1.7" height="1.6" fill="#eef"/><rect x="8.2" y="5.0" width="1.7" height="1.6" fill="#eef"/><rect x="11.1" y="2.3" width="1.7" height="1.6" fill="#eef"/><rect x="11.1" y="5.0" width="1.7" height="1.6" fill="#eef"/><rect x="14.0" y="2.3" width="1.7" height="1.6" fill="#eef"/><rect x="14.0" y="5.0" width="1.7" height="1.6" fill="#eef"/><rect x="5" y="8.8" width="9" height="1.6" fill="#eef"/></svg>
<svg class="r" style="left:1956px;top:85.5px;" width="14.5" height="18" viewBox="0 0 14.5 18"><path d="M7.25 0.6 C3.6 0.6 0.8 3.4 0.8 6.8 C0.8 9.1 2 10.8 3.6 11.9 V13.6 H10.9 V11.9 C12.5 10.8 13.7 9.1 13.7 6.8 C13.7 3.4 10.9 0.6 7.25 0.6z" fill="#4068d4"/><rect x="4.3" y="15.2" width="5.9" height="2" rx="0.6" fill="#4068d4"/></svg>
<svg class="r" style="left:1979.5px;top:91.5px;" width="11.5" height="6.5" viewBox="0 0 11.5 6.5"><polygon points="0.3,0.3 11.2,0.3 5.75,5.9" fill="#4068d4"/></svg>
<svg class="r" style="left:2016px;top:85px;" width="19" height="18" viewBox="0 0 19 18"><path d="M1.8 6.5 V1.8 H6.5 M12.1 1.8 H16.9 V6.5 M16.9 11.5 V16.2 H12.1 M6.5 16.2 H1.8 V11.5" fill="none" stroke="#4068d4" stroke-width="2.3"/></svg>
<div class="r" style="left:2046px;top:103px;width:2px;height:14px;background:#1a1a1a"></div>
<div class="r" style="left:436px;top:175px;width:1612px;height:1px;background:#e0e0e0"></div>
<svg class="r" style="left:447px;top:137px;" width="19" height="19" viewBox="0 0 19 19"><rect x="1.3" y="1.3" width="16.2" height="16.2" fill="none" stroke="#202124" stroke-width="2.2"/><rect x="1.3" y="1.3" width="16.2" height="4.6" fill="#202124"/><path d="M1.3 9.4 H17.5 M1.3 13.2 H17.5 M6.5 5.8 V17.5 M12 5.8 V17.5" stroke="#202124" stroke-width="1.9"/></svg>
<div class="t" style="top:134.56px;font-size:21.90px;color:#202124;transform:scaleX(0.9885);transform-origin:0 0;left:486.20px;">Analytics_report</div>
<svg class="r" style="left:714.5px;top:136.5px;" width="19" height="19" viewBox="0 0 19 19"><circle cx="7.6" cy="7.6" r="5.2" fill="none" stroke="#4068d4" stroke-width="2.4"/><line x1="11.4" y1="11.4" x2="17.2" y2="17.2" stroke="#4068d4" stroke-width="2.8"/></svg>
<div class="t" style="top:140.45px;font-size:15.30px;color:#4068d4;-webkit-text-stroke:0.35px currentColor;transform:scaleX(0.9020);transform-origin:0 0;left:739.20px;">QUERY</div>
<svg class="r" style="left:798px;top:143.3px;" width="11" height="7" viewBox="0 0 11 7"><polygon points="0.3,0.5 10.4,0.5 5.35,5.8" fill="#4068d4"/></svg>
<svg class="r" style="left:852px;top:134.5px;" width="22" height="22" viewBox="0 0 24 24"><path fill="#4068d4" d="M15 12c2.21 0 4-1.79 4-4s-1.79-4-4-4-4 1.79-4 4 1.79 4 4 4zm-9-2V7H4v3H1v2h3v3h2v-3h3v-2H6zm9 4c-2.67 0-8 1.34-8 4v2h16v-2c0-2.66-5.33-4-8-4z"/></svg>
<div class="t" style="top:140.45px;font-size:15.30px;color:#4068d4;-webkit-text-stroke:0.35px currentColor;transform:scaleX(0.9450);transform-origin:0 0;left:877.30px;">SHARE</div>
<svg class="r" style="left:967.5px;top:137px;" width="17" height="18" viewBox="0 0 17 18"><path d="M1.9 13.8 V1.7 H10.6" fill="none" stroke="#4068d4" stroke-width="1.9"/><rect x="6.7" y="5.8" width="8" height="10.6" rx="0.5" fill="none" stroke="#4068d4" stroke-width="2"/></svg>
<div class="t" style="top:140.45px;font-size:15.30px;color:#4068d4;-webkit-text-stroke:0.35px currentColor;transform:scaleX(0.9240);transform-origin:0 0;left:991.00px;">COPY</div>
<svg class="r" style="left:1072.5px;top:137.3px;" width="16" height="17" viewBox="0 0 16 17"><rect x="1.6" y="1.4" width="12.6" height="14.4" rx="0.6" fill="none" stroke="#4068d4" stroke-width="2"/><path d="M7.9 4.2 V9.6 M5.2 6.9 H10.6 M5.2 11.8 H10.6" stroke="#4068d4" stroke-width="1.7"/></svg>
<div class="t" style="top:140.45px;font-size:15.30px;color:#4068d4;-webkit-text-stroke:0.35px currentColor;transform:scaleX(0.9667);transform-origin:0 0;left:1094.70px;">SNAPSHOT</div>
<svg class="r" style="left:1217.5px;top:137px;" width="15" height="17.5" viewBox="0 0 15 17.5"><rect x="1.5" y="4.3" width="12" height="13" rx="1.3" fill="#4068d4"/><rect x="0.3" y="2" width="14.4" height="2" fill="#4068d4"/><rect x="4.8" y="0.3" width="5.4" height="2.5" fill="#4068d4"/></svg>
<div class="t" style="top:140.45px;font-size:15.30px;color:#4068d4;-webkit-text-stroke:0.35px currentColor;transform:scaleX(0.9227);transform-origin:0 0;left:1240.00px;">DELETE</div>
<svg class="r" style="left:1335.5px;top:137.5px;" width="16" height="16" viewBox="0 0 16 16"><path d="M8 0.6 L14.5 7 H10.6 V11.7 H5.4 V7 H1.5 Z" fill="#4068d4"/><path d="M1.3 10 V15 H14.7 V10" fill="none" stroke="#4068d4" stroke-width="2.2"/></svg>
<div class="t" style="top:140.45px;font-size:15.30px;color:#4068d4;-webkit-text-stroke:0.35px currentColor;transform:scaleX(0.9281);transform-origin:0 0;left:1358.20px;">EXPORT</div>
<svg class="r" style="left:1425.5px;top:143.3px;" width="11" height="7" viewBox="0 0 11 7"><polygon points="0.3,0.5 10.4,0.5 5.35,5.8" fill="#4068d4"/></svg>
<svg class="r" style="left:1921.4px;top:133.8px;" width="25" height="25" viewBox="0 0 24 24"><path fill="#4068d4" d="M17.65 6.35C16.2 4.9 14.21 4 12 4c-4.42 0-7.99 3.58-7.99 8s3.57 8 7.99 8c3.73 0 6.84-2.55 7.73-6h-2.08c-.82 2.33-3.04 4-5.65 4-3.31 0-6-2.690-6-6s2.69-6 6-6c1.66 0 3.14.69 4.22 1.78L13 11h7V4l-2.35 2.35z"/></svg>
<div class="t" style="top:140.45px;font-size:15.30px;color:#4068d4;-webkit-text-stroke:0.35px currentColor;transform:scaleX(0.8947);transform-origin:0 0;left:1949.50px;">REFRESH</div>
<div class="t" style="top:190.43px;font-size:15.80px;color:#5f6368;-webkit-text-stroke:0.35px currentColor;transform:scaleX(0.9394);transform-origin:0 0;left:464.40px;">SCHEMA</div>
<div class="t" style="top:190.43px;font-size:15.80px;color:#5f6368;-webkit-text-stroke:0.35px currentColor;transform:scaleX(0.9382);transform-origin:0 0;left:585.90px;">DETAILS</div>
<div class="r" style="left:681px;top:181.5px;width:111px;height:30.8px;box-sizing:border-box;border:3px solid #4068d4;border-radius:5px"></div>
<div class="t" style="top:190.43px;font-size:15.80px;color:#4068d4;-webkit-text-stroke:0.35px currentColor;transform:scaleX(0.9122);transform-origin:0 0;left:703.50px;">PREVIEW</div>
<div class="r" style="left:675px;top:217px;width:123.5px;height:2.2px;background:#4068d4"></div>
<div class="t" style="top:190.43px;font-size:15.80px;color:#5f6368;-webkit-text-stroke:0.35px currentColor;transform:scaleX(0.9153);transform-origin:0 0;left:826.90px;">LINEAGE</div>
<div class="t" style="top:190.43px;font-size:15.80px;color:#5f6368;-webkit-text-stroke:0.35px currentColor;transform:scaleX(0.9315);transform-origin:0 0;left:947.10px;">DATA PROFILE</div>
<div class="t" style="top:190.43px;font-size:15.80px;color:#5f6368;-webkit-text-stroke:0.35px currentColor;transform:scaleX(0.9441);transform-origin:0 0;left:1107.50px;">DATA QUALITY</div>
<div class="r" style="left:436px;top:219.3px;width:1594px;height:30.2px;background:#f8f8f8"></div>
<div class="r" style="left:436px;top:219px;width:1594px;height:1px;background:#e4e4e4"></div>
<div class="r" style="left:436px;top:249.3px;width:1594px;height:1px;background:#e6e6e6"></div>
<div class="r" style="left:436px;top:250.3px;width:72px;height:703px;background:#f8f8f8"></div>
<div class="r" style="left:559.0px;top:219.5px;width:1px;height:734px;background:#e5e5e5"></div>
<div class="r" style="left:679.0px;top:219.5px;width:1px;height:734px;background:#e5e5e5"></div>
<div class="r" style="left:799.0px;top:219.5px;width:1px;height:734px;background:#e5e5e5"></div>
<div class="r" style="left:919.0px;top:219.5px;width:1px;height:734px;background:#e5e5e5"></div>
<div class="r" style="left:1159.0px;top:219.5px;width:1px;height:734px;background:#e5e5e5"></div>
<div class="r" style="left:1279.0px;top:219.5px;width:1px;height:734px;background:#e5e5e5"></div>
<div class="r" style="left:1399.0px;top:219.5px;width:1px;height:734px;background:#e5e5e5"></div>
<div class="r" style="left:1519.0px;top:219.5px;width:1px;height:734px;background:#e5e5e5"></div>
<div class="r" style="left:1639.0px;top:219.5px;width:1px;height:734px;background:#e5e5e5"></div>
<div class="r" style="left:1759.0px;top:219.5px;width:1px;height:734px;background:#e5e5e5"></div>
<div class="r" style="left:1999.0px;top:219.5px;width:1px;height:734px;background:#e5e5e5"></div>
<div class="r" style="left:436px;top:393px;width:1594px;height:1px;background:#e5e5e5"></div>
<div class="r" style="left:436px;top:538px;width:1594px;height:1px;background:#e5e5e5"></div>
<div class="r" style="left:436px;top:683px;width:1594px;height:1px;background:#e5e5e5"></div>
<div class="r" style="left:436px;top:828px;width:1594px;height:1px;background:#e5e5e5"></div>
<div class="t" style="top:226.29px;font-size:15.60px;color:#5f6368;transform:scaleX(0.8914);transform-origin:0 0;left:450.00px;">Row</div>
<svg class="r" style="left:495px;top:238.5px;" width="12" height="11" viewBox="0 0 12 11"><path d="M0.8 10.3 L10.6 1 M5.2 10.3 L9.8 6" stroke="#555" stroke-width="1.3"/></svg>
<div class="r" style="left:508px;top:215px;width:51.5px;height:45px;overflow:hidden">
<div class="t" style="left:-0.30px;top:11.29px;font-size:15.60px;color:#5f6368;transform:scaleX(0.9149);transform-origin:0 0">ge_start</div>
</div>
<svg class="r" style="left:547px;top:238.5px;" width="12" height="11" viewBox="0 0 12 11"><path d="M0.8 10.3 L10.6 1 M5.2 10.3 L9.8 6" stroke="#555" stroke-width="1.3"/></svg>
<div class="r" style="left:560.5px;top:215px;width:119.0px;height:45px;overflow:hidden">
<div class="t" style="left:13.60px;top:11.29px;font-size:15.60px;color:#5f6368;transform:scaleX(0.8799);transform-origin:0 0">dateRange_end_month</div>
</div>
<svg class="r" style="left:667.0px;top:238.5px;" width="12" height="11" viewBox="0 0 12 11"><path d="M0.8 10.3 L10.6 1 M5.2 10.3 L9.8 6" stroke="#555" stroke-width="1.3"/></svg>
<div class="r" style="left:680.5px;top:215px;width:119.0px;height:45px;overflow:hidden">
<div class="t" style="left:13.60px;top:11.29px;font-size:15.60px;color:#5f6368;transform:scaleX(0.8799);transform-origin:0 0">dateRange_end_month</div>
</div>
<svg class="r" style="left:787.0px;top:238.5px;" width="12" height="11" viewBox="0 0 12 11"><path d="M0.8 10.3 L10.6 1 M5.2 10.3 L9.8 6" stroke="#555" stroke-width="1.3"/></svg>
<div class="r" style="left:800.5px;top:215px;width:119.0px;height:45px;overflow:hidden">
<div class="t" style="left:13.60px;top:11.29px;font-size:15.60px;color:#5f6368;transform:scaleX(0.8799);transform-origin:0 0">dateRange_end_month</div>
</div>
<svg class="r" style="left:907.0px;top:238.5px;" width="12" height="11" viewBox="0 0 12 11"><path d="M0.8 10.3 L10.6 1 M5.2 10.3 L9.8 6" stroke="#555" stroke-width="1.3"/></svg>
<div class="t" style="top:226.29px;font-size:15.60px;color:#5f6368;transform:scaleX(0.9447);transform-origin:0 0;left:933.80px;">pivotValues</div>
<svg class="r" style="left:1147px;top:238.5px;" width="12" height="11" viewBox="0 0 12 11"><path d="M0.8 10.3 L10.6 1 M5.2 10.3 L9.8 6" stroke="#555" stroke-width="1.3"/></svg>
<div class="t" style="top:226.29px;font-size:15.60px;color:#5f6368;transform:scaleX(0.9531);transform-origin:0 0;left:1173.70px;">impressions</div>
<svg class="r" style="left:1267px;top:238.5px;" width="12" height="11" viewBox="0 0 12 11"><path d="M0.8 10.3 L10.6 1 M5.2 10.3 L9.8 6" stroke="#555" stroke-width="1.3"/></svg>
<div class="t" style="top:226.29px;font-size:15.60px;color:#5f6368;transform:scaleX(0.9463);transform-origin:0 0;left:1293.80px;">reactions</div>
<svg class="r" style="left:1387px;top:238.5px;" width="12" height="11" viewBox="0 0 12 11"><path d="M0.8 10.3 L10.6 1 M5.2 10.3 L9.8 6" stroke="#555" stroke-width="1.3"/></svg>
<div class="t" style="top:226.29px;font-size:15.60px;color:#5f6368;transform:scaleX(0.9895);transform-origin:0 0;left:1413.50px;">clicks</div>
<svg class="r" style="left:1507px;top:238.5px;" width="12" height="11" viewBox="0 0 12 11"><path d="M0.8 10.3 L10.6 1 M5.2 10.3 L9.8 6" stroke="#555" stroke-width="1.3"/></svg>
<div class="r" style="left:1520px;top:215px;width:119px;height:45px;overflow:hidden">
<div class="t" style="left:14.40px;top:11.29px;font-size:15.60px;color:#5f6368;transform:scaleX(0.9498);transform-origin:0 0">externalWebsiteConversions</div>
</div>
<svg class="r" style="left:1627px;top:238.5px;" width="12" height="11" viewBox="0 0 12 11"><path d="M0.8 10.3 L10.6 1 M5.2 10.3 L9.8 6" stroke="#555" stroke-width="1.3"/></svg>
<div class="t" style="top:226.29px;font-size:15.60px;color:#5f6368;transform:scaleX(0.9352);transform-origin:0 0;left:1653.80px;">costInUsd</div>
<svg class="r" style="left:1747px;top:238.5px;" width="12" height="11" viewBox="0 0 12 11"><path d="M0.8 10.3 L10.6 1 M5.2 10.3 L9.8 6" stroke="#555" stroke-width="1.3"/></svg>
<div class="t" style="top:226.29px;font-size:15.60px;color:#5f6368;transform:scaleX(0.9366);transform-origin:0 0;left:1773.70px;">campaign_account</div>
<svg class="r" style="left:1987px;top:238.5px;" width="12" height="11" viewBox="0 0 12 11"><path d="M0.8 10.3 L10.6 1 M5.2 10.3 L9.8 6" stroke="#555" stroke-width="1.3"/></svg>
<div class="r" style="left:2000px;top:215px;width:30px;height:45px;overflow:hidden">
<div class="t" style="left:13.70px;top:11.29px;font-size:15.60px;color:#5f6368;transform:scaleX(0.9273);transform-origin:0 0">campaign</div>
</div>
<div class="t" style="top:255.68px;font-size:15.50px;color:#202124;right:1556.80px;text-align:right;">1</div>
<div class="t" style="top:255.68px;font-size:15.50px;color:#202124;transform:scaleX(0.9362);transform-origin:0 0;left:512.00px;">2023</div>
<div class="t" style="top:255.68px;font-size:15.50px;color:#202124;right:1384.40px;text-align:right;">7</div>
<div class="t" style="top:255.68px;font-size:15.50px;color:#202124;right:1264.40px;text-align:right;">8</div>
<div class="t" style="top:255.68px;font-size:15.50px;color:#202124;transform:scaleX(0.9362);transform-origin:100% 0;right:1144.50px;text-align:right;">2023</div>
<div class="t" style="top:255.68px;font-size:15.50px;color:#202124;transform:scaleX(0.9078);transform-origin:0 0;left:933.80px;">urn:li:sponsoredCampaign:227…</div>
<div class="t" style="top:255.68px;font-size:15.50px;color:#202124;right:783.80px;text-align:right;">0</div>
<div class="t" style="top:255.68px;font-size:15.50px;color:#202124;right:663.80px;text-align:right;">0</div>
<div class="t" style="top:255.68px;font-size:15.50px;color:#202124;right:544.00px;text-align:right;">0</div>
<div class="t" style="top:255.68px;font-size:15.50px;color:#202124;right:424.00px;text-align:right;">2</div>
<div class="t" style="top:255.68px;font-size:15.50px;color:#202124;transform:scaleX(0.9581);transform-origin:100% 0;right:304.00px;text-align:right;">0.0</div>
<div class="t" style="top:255.68px;font-size:15.50px;color:#202124;transform:scaleX(0.9158);transform-origin:0 0;left:1773.70px;">urn:li:sponsoredAccount:50332…</div>
<div class="r" style="left:2000px;top:248.3px;width:30px;height:26px;overflow:hidden">
<div class="t" style="left:13.70px;top:7.38px;font-size:15.5px;color:#202124;transform:scaleX(0.93);transform-origin:0 0">urn:li:sponsored</div>
</div>
<div class="t" style="top:400.58px;font-size:15.50px;color:#202124;right:1556.80px;text-align:right;">2</div>
<div class="t" style="top:400.58px;font-size:15.50px;color:#202124;transform:scaleX(0.9362);transform-origin:0 0;left:512.00px;">2023</div>
<div class="t" style="top:400.58px;font-size:15.50px;color:#202124;transform:scaleX(0.9823);transform-origin:100% 0;right:1384.40px;text-align:right;">15</div>
<div class="t" style="top:400.58px;font-size:15.50px;color:#202124;right:1264.40px;text-align:right;">8</div>
<div class="t" style="top:400.58px;font-size:15.50px;color:#202124;transform:scaleX(0.9362);transform-origin:100% 0;right:1144.50px;text-align:right;">2023</div>
<div class="t" style="top:400.58px;font-size:15.50px;color:#202124;transform:scaleX(0.9078);transform-origin:0 0;left:933.80px;">urn:li:sponsoredCampaign:227…</div>
<div class="t" style="top:400.58px;font-size:15.50px;color:#202124;right:783.80px;text-align:right;">0</div>
<div class="t" style="top:400.58px;font-size:15.50px;color:#202124;right:663.80px;text-align:right;">0</div>
<div class="t" style="top:400.58px;font-size:15.50px;color:#202124;right:544.00px;text-align:right;">0</div>
<div class="t" style="top:400.58px;font-size:15.50px;color:#202124;right:424.00px;text-align:right;">1</div>
<div class="t" style="top:400.58px;font-size:15.50px;color:#202124;transform:scaleX(0.9581);transform-origin:100% 0;right:304.00px;text-align:right;">0.0</div>
<div class="t" style="top:400.58px;font-size:15.50px;color:#202124;transform:scaleX(0.9158);transform-origin:0 0;left:1773.70px;">urn:li:sponsoredAccount:50332…</div>
<div class="r" style="left:2000px;top:393.20000000000005px;width:30px;height:26px;overflow:hidden">
<div class="t" style="left:13.70px;top:7.38px;font-size:15.5px;color:#202124;transform:scaleX(0.93);transform-origin:0 0">urn:li:sponsored</div>
</div>
<div class="t" style="top:545.48px;font-size:15.50px;color:#202124;right:1556.80px;text-align:right;">3</div>
<div class="t" style="top:545.48px;font-size:15.50px;color:#202124;transform:scaleX(0.9362);transform-origin:0 0;left:512.00px;">2023</div>
<div class="t" style="top:545.48px;font-size:15.50px;color:#202124;right:1384.40px;text-align:right;">8</div>
<div class="t" style="top:545.48px;font-size:15.50px;color:#202124;right:1264.40px;text-align:right;">8</div>
<div class="t" style="top:545.48px;font-size:15.50px;color:#202124;transform:scaleX(0.9362);transform-origin:100% 0;right:1144.50px;text-align:right;">2023</div>
<div class="t" style="top:545.48px;font-size:15.50px;color:#202124;transform:scaleX(0.9078);transform-origin:0 0;left:933.80px;">urn:li:sponsoredCampaign:227…</div>
<div class="t" style="top:545.48px;font-size:15.50px;color:#202124;right:783.80px;text-align:right;">0</div>
<div class="t" style="top:545.48px;font-size:15.50px;color:#202124;right:663.80px;text-align:right;">0</div>
<div class="t" style="top:545.48px;font-size:15.50px;color:#202124;right:544.00px;text-align:right;">0</div>
<div class="t" style="top:545.48px;font-size:15.50px;color:#202124;right:424.00px;text-align:right;">1</div>
<div class="t" style="top:545.48px;font-size:15.50px;color:#202124;transform:scaleX(0.9581);transform-origin:100% 0;right:304.00px;text-align:right;">0.0</div>
<div class="t" style="top:545.48px;font-size:15.50px;color:#202124;transform:scaleX(0.9158);transform-origin:0 0;left:1773.70px;">urn:li:sponsoredAccount:50332…</div>
<div class="r" style="left:2000px;top:538.1px;width:30px;height:26px;overflow:hidden">
<div class="t" style="left:13.70px;top:7.38px;font-size:15.5px;color:#202124;transform:scaleX(0.93);transform-origin:0 0">urn:li:sponsored</div>
</div>
<div class="t" style="top:690.38px;font-size:15.50px;color:#202124;right:1556.80px;text-align:right;">4</div>
<div class="t" style="top:690.38px;font-size:15.50px;color:#202124;transform:scaleX(0.9362);transform-origin:0 0;left:512.00px;">2023</div>
<div class="t" style="top:690.38px;font-size:15.50px;color:#202124;transform:scaleX(0.9823);transform-origin:100% 0;right:1384.40px;text-align:right;">18</div>
<div class="t" style="top:690.38px;font-size:15.50px;color:#202124;right:1264.40px;text-align:right;">8</div>
<div class="t" style="top:690.38px;font-size:15.50px;color:#202124;transform:scaleX(0.9362);transform-origin:100% 0;right:1144.50px;text-align:right;">2023</div>
<div class="t" style="top:690.38px;font-size:15.50px;color:#202124;transform:scaleX(0.9078);transform-origin:0 0;left:933.80px;">urn:li:sponsoredCampaign:227…</div>
<div class="t" style="top:690.38px;font-size:15.50px;color:#202124;right:783.80px;text-align:right;">0</div>
<div class="t" style="top:690.38px;font-size:15.50px;color:#202124;right:663.80px;text-align:right;">0</div>
<div class="t" style="top:690.38px;font-size:15.50px;color:#202124;right:544.00px;text-align:right;">0</div>
<div class="t" style="top:690.38px;font-size:15.50px;color:#202124;right:424.00px;text-align:right;">1</div>
<div class="t" style="top:690.38px;font-size:15.50px;color:#202124;transform:scaleX(0.9581);transform-origin:100% 0;right:304.00px;text-align:right;">0.0</div>
<div class="t" style="top:690.38px;font-size:15.50px;color:#202124;transform:scaleX(0.9158);transform-origin:0 0;left:1773.70px;">urn:li:sponsoredAccount:50332…</div>
<div class="r" style="left:2000px;top:683.0px;width:30px;height:26px;overflow:hidden">
<div class="t" style="left:13.70px;top:7.38px;font-size:15.5px;color:#202124;transform:scaleX(0.93);transform-origin:0 0">urn:li:sponsored</div>
</div>
<div class="t" style="top:835.28px;font-size:15.50px;color:#202124;right:1556.80px;text-align:right;">5</div>
<div class="t" style="top:835.28px;font-size:15.50px;color:#202124;transform:scaleX(0.9362);transform-origin:0 0;left:512.00px;">2023</div>
<div class="t" style="top:835.28px;font-size:15.50px;color:#202124;right:1384.40px;text-align:right;">8</div>
<div class="t" style="top:835.28px;font-size:15.50px;color:#202124;right:1264.40px;text-align:right;">8</div>
<div class="t" style="top:835.28px;font-size:15.50px;color:#202124;transform:scaleX(0.9362);transform-origin:100% 0;right:1144.50px;text-align:right;">2023</div>
<div class="t" style="top:835.28px;font-size:15.50px;color:#202124;transform:scaleX(0.9078);transform-origin:0 0;left:933.80px;">urn:li:sponsoredCampaign:228…</div>
<div class="t" style="top:835.28px;font-size:15.50px;color:#202124;transform:scaleX(0.9561);transform-origin:100% 0;right:783.80px;text-align:right;">1416</div>
<div class="t" style="top:835.28px;font-size:15.50px;color:#202124;right:663.80px;text-align:right;">2</div>
<div class="t" style="top:835.28px;font-size:15.50px;color:#202124;transform:scaleX(0.9859);transform-origin:100% 0;right:544.00px;text-align:right;">11</div>
<div class="t" style="top:835.28px;font-size:15.50px;color:#202124;right:424.00px;text-align:right;">2</div>
<div class="t" style="top:835.28px;font-size:15.50px;color:#202124;transform:scaleX(0.8950);transform-origin:0 0;left:1653.90px;">11.2800000…</div>
<div class="t" style="top:835.28px;font-size:15.50px;color:#202124;transform:scaleX(0.9158);transform-origin:0 0;left:1773.70px;">urn:li:sponsoredAccount:50332…</div>
<div class="r" style="left:2000px;top:827.9000000000001px;width:30px;height:26px;overflow:hidden">
<div class="t" style="left:13.70px;top:7.38px;font-size:15.5px;color:#202124;transform:scaleX(0.93);transform-origin:0 0">urn:li:sponsored</div>
</div>
<div class="r" style="left:2037.7px;top:220.5px;width:10.3px;height:108.4px;background:#c6c6c6"></div>
<div class="r" style="left:541.7px;top:961px;width:304.7px;height:11px;background:#c6c6c6"></div>
<div class="r" style="left:436px;top:972px;width:1612px;height:1px;background:#e0e0e0"></div>
<div class="t" style="top:984.89px;font-size:16.20px;color:#5f6368;transform:scaleX(0.9386);transform-origin:0 0;left:1505.70px;">Results per page:</div>
<div class="t" style="top:984.89px;font-size:16.20px;color:#202124;transform:scaleX(0.9389);transform-origin:0 0;left:1662.10px;">50</div>
<svg class="r" style="left:1685.5px;top:989.5px;" width="12.5" height="7.5" viewBox="0 0 12.5 7.5"><polygon points="0.3,0.3 12.2,0.3 6.25,6.9" fill="#202124"/></svg>
<div class="t" style="top:984.89px;font-size:16.20px;color:#5f6368;transform:scaleX(0.9662);transform-origin:0 0;left:1736.50px;">1 – 50 of 332</div>
<svg class="r" style="left:1856.8px;top:977.4px;" width="29" height="29" viewBox="0 0 24 24"><path fill="#6f6f6f" d="M18.41 16.59L13.82 12l4.59-4.59L17 6l-6 6 6 6zM6 6h2v12H6z"/></svg>
<svg class="r" style="left:1903.6px;top:977.2px;" width="29" height="29" viewBox="0 0 24 24"><path fill="#6f6f6f" d="M15.41 7.41L14 6l-6 6 6 6 1.41-1.41L10.83 12z"/></svg>
<svg class="r" style="left:1951.8px;top:977.2px;" width="29" height="29" viewBox="0 0 24 24"><path fill="#111" d="M10 6L8.59 7.410 13.17 12l-4.58 4.59L10 18l6-6z"/></svg>
<svg class="r" style="left:2001.3px;top:977.4px;" width="29" height="29" viewBox="0 0 24 24"><path fill="#111" d="M5.59 7.41L10.18 12l-4.59 4.59L7 18l6-6-6-6zM16 6h2v12h-2z"/></svg>
<div class="r" style="left:436px;top:1012px;width:1612px;height:1px;background:#e0e0e0"></div>
<div class="t" style="top:1027.56px;font-size:16.00px;color:#5f6368;-webkit-text-stroke:0.35px currentColor;transform:scaleX(0.9084);transform-origin:0 0;left:493.10px;">PERSONAL HISTORY</div>
<div class="t" style="top:1027.56px;font-size:16.00px;color:#5f6368;-webkit-text-stroke:0.35px currentColor;transform:scaleX(0.9056);transform-origin:0 0;left:706.50px;">PROJECT HISTORY</div>
<svg class="r" style="left:1873.3px;top:1022px;" width="25.5" height="25.5" viewBox="0 0 24 24"><path fill="#4068d4" d="M17.65 6.35C16.2 4.9 14.21 4 12 4c-4.42 0-7.99 3.58-7.99 8s3.57 8 7.99 8c3.73 0 6.84-2.55 7.73-6h-2.08c-.82 2.33-3.04 4-5.65 4-3.31 0-6-2.690-6-6s2.69-6 6-6c1.66 0 3.14.69 4.22 1.78L13 11h7V4l-2.35 2.35z"/></svg>
<div class="t" style="top:1027.34px;font-size:15.90px;color:#4068d4;-webkit-text-stroke:0.35px currentColor;transform:scaleX(0.8645);transform-origin:0 0;left:1901.70px;">REFRESH</div>
<svg class="r" style="left:1998.6px;top:1028.5px;" width="14" height="11" viewBox="0 0 14 11"><path d="M1.6 9.3 L7 3.6 L12.4 9.3" fill="none" stroke="#111" stroke-width="2.3"/></svg>
<div class="r" style="left:436px;top:1056px;width:1612px;height:1px;background:#e0e0e0"></div>
</body></html>
